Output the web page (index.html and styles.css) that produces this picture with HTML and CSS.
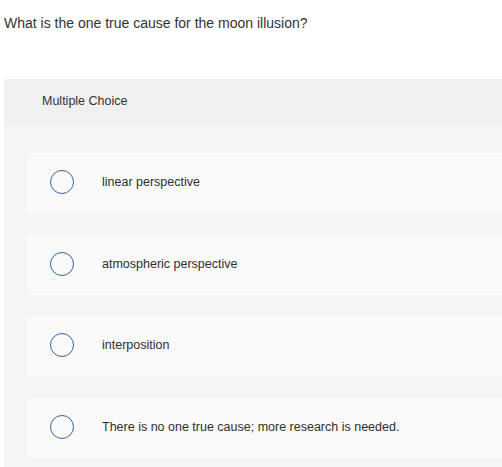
FILE: index.html
```html
<!doctype html>
<html>
<head>
    <meta charset="utf-8">
    <title>Multiple Choice Question</title>
    <link rel="stylesheet" href="styles.css">
</head>
<body>
    <div class="question">What is the one true cause for the moon illusion?</div>

    <section class="quiz">
        <div class="quiz-header">Multiple Choice</div>
        <ul class="choices">
            <li class="choice"><span class="radio"></span><span class="label">linear perspective</span></li>
            <li class="choice"><span class="radio"></span><span class="label">atmospheric perspective</span></li>
            <li class="choice"><span class="radio"></span><span class="label">interposition</span></li>
            <li class="choice"><span class="radio"></span><span class="label">There is no one true cause; more research is needed.</span></li>
        </ul>
    </section>
</body>
</html>
```

FILE: styles.css
```css
/* Reset */
* { padding:0; margin:0; box-sizing: border-box; }

/* Page Style */
html, body { height: 100%; }
body {
    background-color: #fff;
    font-family: "Liberation Sans", Arial, Helvetica, sans-serif;
    color: #333;
    overflow: hidden;
    display: flex;
    flex-direction: column;
}
.question {
    font-size: 14px;
    line-height: 16px;
    padding: 15px 4px 0;
    margin-bottom: 48px;
}
.quiz {
    flex: 1;
    margin-left: 4px;
    background-color: #f5f5f5;
}
.quiz-header {
    height: 44px;
    line-height: 44px;
    padding-left: 38px;
    font-size: 12.5px;
    background-color: #f0f0f0;
}
.choices {
    list-style-type: none;
    padding: 30px 0 0 23px;
}
.choice {
    display: flex;
    align-items: center;
    height: 60px;
    padding: 0 0 2px 23px;
    margin-bottom: 21.6px;
    background-color: #fafafa;
    border-radius: 3px 0 0 3px;
    font-size: 12.5px;
}
.radio {
    width: 24px;
    height: 24px;
    border: 1.5px solid #35649a;
    border-radius: 50%;
    margin-right: 28px;
    flex-shrink: 0;
}
.label { color: #2f2f2f; }
```
